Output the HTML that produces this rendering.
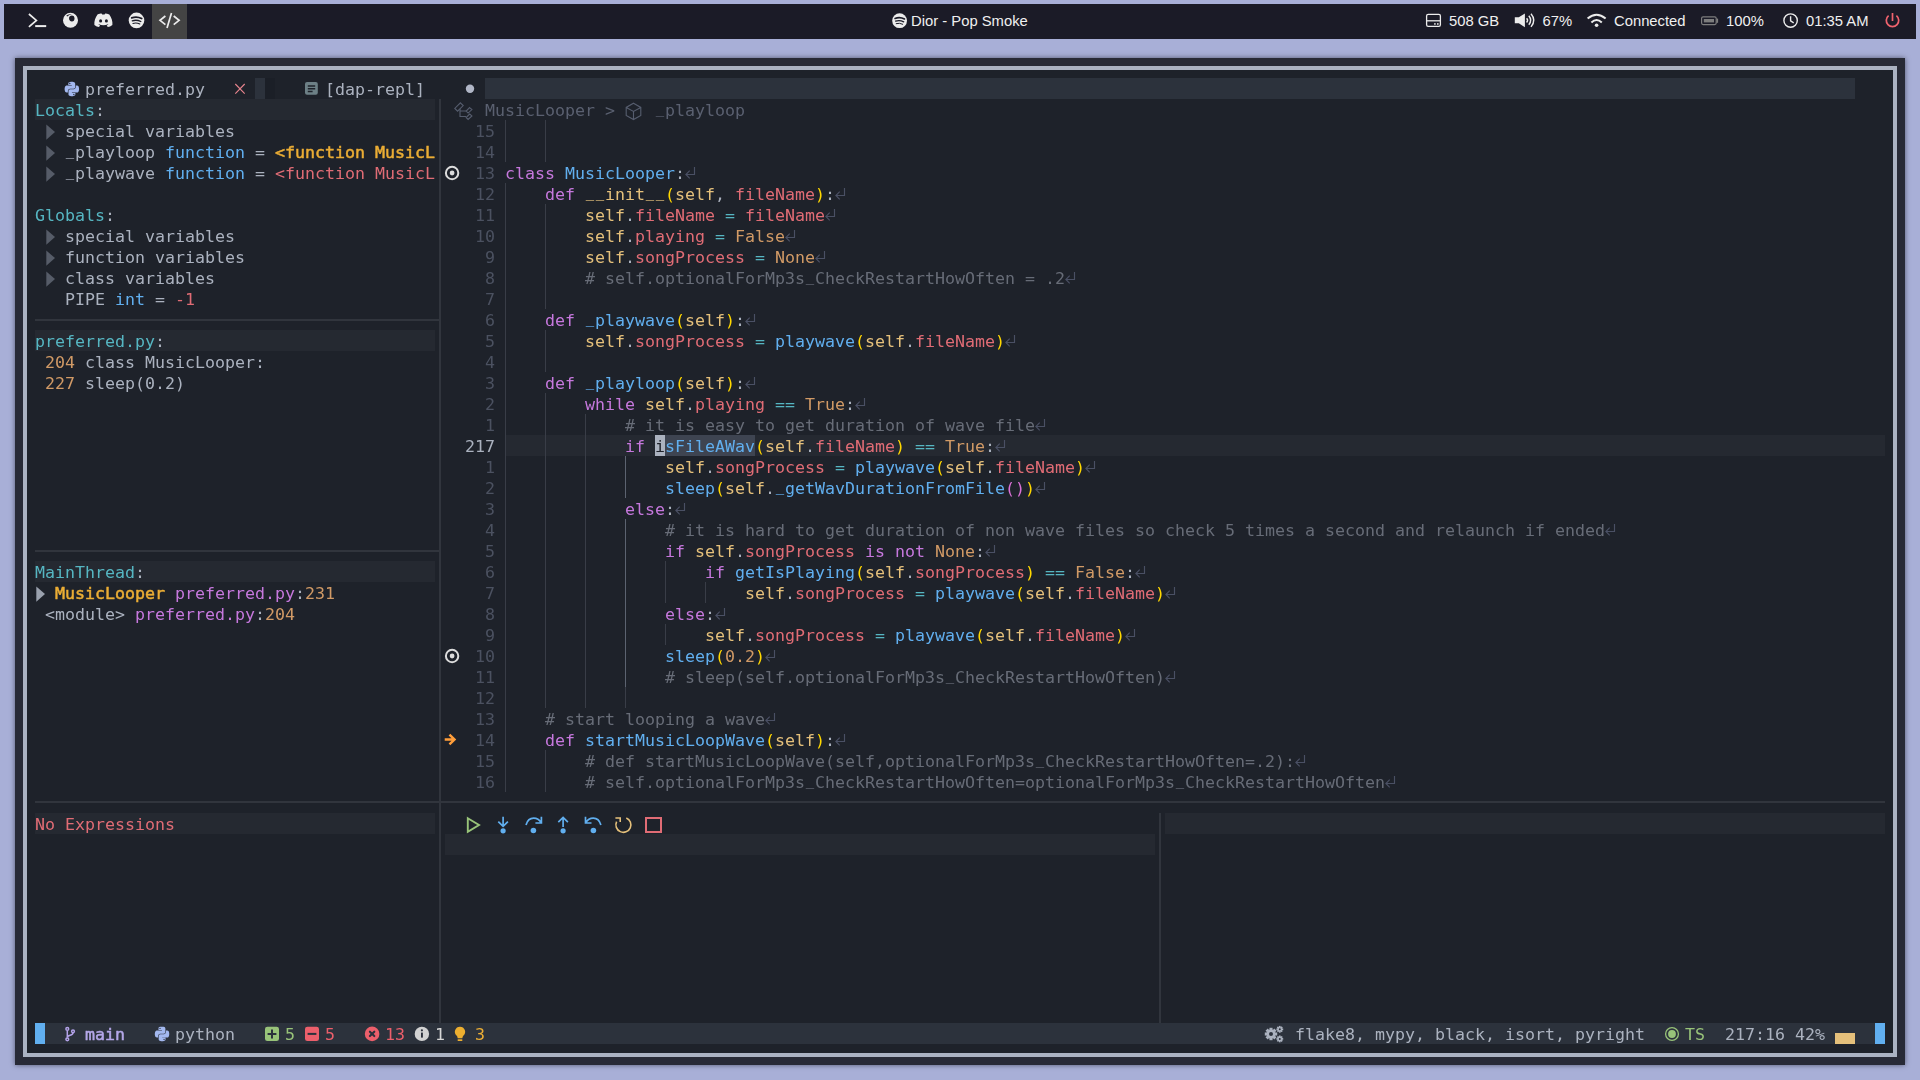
<!DOCTYPE html><html><head><meta charset="utf-8"><title>nvim dap</title><style>
html,body{margin:0;padding:0}
body{width:1920px;height:1080px;overflow:hidden;background:#a8afd7;position:relative;font-family:"DejaVu Sans Mono","Liberation Mono",monospace}
.b{position:absolute}
.t{position:absolute;height:21px;line-height:21px;font-size:16.61px;white-space:pre;color:#abb2bf;overflow:visible;padding-top:1px;box-sizing:border-box}
svg{position:absolute;overflow:visible}
#bar{position:absolute;left:4px;top:4px;width:1912px;height:35px;background:#1b1b27}
.bt{position:absolute;top:4px;height:35px;line-height:34px;font-family:"Liberation Sans",sans-serif;font-size:14.8px;color:#f0f0f0;white-space:pre}
#win{position:absolute;left:15px;top:58px;width:1890px;height:1007px;background:#282a36;box-shadow:0 0 5px rgba(0,0,10,.5)}
#frm{position:absolute;left:23px;top:66px;width:1874px;height:991px;background:#abb2c2}
#g{position:absolute;left:0;top:0;width:1920px;height:1080px;will-change:transform}
#term{position:absolute;left:27px;top:70px;width:1866px;height:983px;background:#1e222a}
.t i{font-style:normal;display:inline-block;transform:translateY(-3px) scaleX(.84)}
.fg{color:#abb2bf}.tl{color:#56b6c2}.bl{color:#61afef}.rd{color:#e06c75}.yl{color:#e5c07b}.or{color:#d19a66}
.pu{color:#c678dd}.gr{color:#98c379}.cm{color:#676c77}.ln{color:#4b5160}.eol{color:#4f5561}.by{color:#ffd700}.bp{color:#da70d6}
.cur{color:#1e222a}.sun{color:#ecae35}.sr{color:#ec5f6b}.wh{color:#d7d7d7}.bd{font-weight:normal;-webkit-text-stroke:0.5px currentColor}.wb{color:#5a6070}.lav{color:#b4a7e8}
</style></head><body>
<div id="bar"></div>
<div class="b " style="left:152px;top:4px;width:35px;height:35px;background:#444444"></div>
<svg style="left:0;top:0" width="1920" height="44" viewBox="0 0 1920 44" fill="none" stroke-linecap="butt">
<g stroke="#ececec" stroke-width="1.7" fill="none">
<path d="M28.9 14 L36.4 20.4 L28.9 26.9"/><path d="M35.2 26.1 H46.2" stroke-width="2"/>
<path d="M165.4 16 L160 20.3 L165.4 24.6"/><path d="M171.5 13 L167 28"/><path d="M173.7 16 L179.1 20.3 L173.7 24.6"/>
</g>
<g fill="#ececec" stroke="none">
<circle cx="70.5" cy="20.3" r="7.5"/>
<path d="M97.5 14.6 C99 13.9 100.6 13.6 101.6 13.6 L102.2 14.6 C103 14.5 104 14.5 104.6 14.6 L105.2 13.6 C106.4 13.7 107.8 14 109.3 14.6 C111.5 17.8 112.8 21.5 112.4 25 C110.8 26.2 109.3 26.9 107.8 27.1 L106.7 25.4 C107.3 25.2 107.9 24.9 108.4 24.6 L108 24.3 C105.2 25.6 101.6 25.6 98.8 24.3 L98.4 24.6 C98.9 24.9 99.5 25.2 100.1 25.4 L99 27.1 C97.5 26.9 96 26.2 94.4 25 C94 21.5 95.3 17.8 97.5 14.6 Z"/>
<circle cx="136.5" cy="20.4" r="7.8"/>
<circle cx="899.6" cy="20.7" r="7.4"/>
</g>
<g fill="#1b1b27" stroke="none">
<ellipse cx="71.9" cy="18.5" rx="2.6" ry="2.9"/>
<path d="M66.2 15.8 Q68.4 13.4 72.6 14.6 Q69.4 14.3 67.3 16.4 Z"/><path d="M69.2 19.8 Q68.2 17.2 70.3 15.7 Q69.6 17.6 70.2 19.4 Z" opacity=".75"/>
<ellipse cx="100.6" cy="20.9" rx="1.5" ry="1.7"/><ellipse cx="106.4" cy="20.9" rx="1.5" ry="1.7"/>
</g>
<g stroke="#1b1b27" fill="none" stroke-linecap="round">
<path d="M131.7 17.9 Q136.8 15.9 141.7 18.6" stroke-width="1.7"/>
<path d="M132.3 20.8 Q136.6 19.3 140.8 21.5" stroke-width="1.4"/>
<path d="M132.9 23.4 Q136.4 22.3 139.8 24" stroke-width="1.1"/>
<path d="M895 18.4 Q899.9 16.5 904.5 19" stroke-width="1.6"/>
<path d="M895.6 21.1 Q899.7 19.7 903.7 21.8" stroke-width="1.3"/>
<path d="M896.2 23.6 Q899.5 22.6 902.7 24.2" stroke-width="1"/>
</g>
<!-- disk -->
<g stroke="#ececec" stroke-width="1.3" fill="none">
<rect x="1426.6" y="14.3" width="13.8" height="12" rx="1.6"/><path d="M1426.6 20.8 H1440.4"/>
</g>
<g fill="#ececec"><rect x="1434.1" y="23.2" width="1.6" height="1.5"/><rect x="1437" y="23.2" width="1.6" height="1.5"/>
<!-- speaker -->
<path d="M1514.8 17.3 H1518.8 L1524.9 13.4 V27.2 L1518.8 23.3 H1514.8 Z"/>
<circle cx="1596.6" cy="25.3" r="1.8"/>
</g>
<g stroke="#ececec" fill="none" stroke-width="1.4">
<path d="M1526.6 18.2 Q1528.6 20.3 1526.6 22.4"/>
<path d="M1528.8 15.8 Q1532.6 20.3 1528.8 24.8"/>
<path d="M1531 13.7 Q1536.6 20.3 1531 26.9"/>
</g>
<g stroke="#ececec" fill="none" stroke-width="2">
<path d="M1587.6 18.6 Q1596.6 10.8 1605.6 18.6"/>
<path d="M1591.4 22.4 Q1596.6 17.6 1601.8 22.4"/>
</g>
<!-- battery -->
<rect x="1701.6" y="16.8" width="14.6" height="7.8" rx="1.5" stroke="#7d7d7d" stroke-width="1.2" fill="none"/>
<rect x="1703.8" y="19" width="10.2" height="3.4" fill="#7d7d7d"/><rect x="1716.6" y="18.6" width="1.5" height="4.2" fill="#7d7d7d"/>
<!-- clock -->
<circle cx="1790.6" cy="20.6" r="6.7" stroke="#ececec" stroke-width="1.4" fill="none"/>
<path d="M1790.6 16.2 V20.8 L1793.7 22.8" stroke="#ececec" stroke-width="1.4" fill="none"/>
<!-- power -->
<path d="M1888.6 15.6 A6.2 6.2 0 1 0 1896.4 15.6" stroke="#f0636e" stroke-width="1.7" fill="none"/>
<path d="M1892.5 13 V21" stroke="#f0636e" stroke-width="1.7"/>
</svg>

<span class="bt" style="left:911px">Dior - Pop Smoke</span>
<span class="bt" style="left:1449px">508 GB</span>
<span class="bt" style="left:1542.5px">67%</span>
<span class="bt" style="left:1614px">Connected</span>
<span class="bt" style="left:1726px">100%</span>
<span class="bt" style="left:1806px">01:35 AM</span>
<div id="win"></div><div id="frm"></div><div id="term"></div><div id="g">
<div class="b " style="left:255px;top:78px;width:10px;height:21px;background:#2c323c"></div>
<div class="b " style="left:265px;top:78px;width:10px;height:21px;background:#1b1f27"></div>
<div class="b " style="left:485px;top:78px;width:1370px;height:21px;background:#2c323c"></div>
<span class="t fg" style="left:85px;top:78px;width:120px">preferred.py</span>
<span class="t fg" style="left:325px;top:78px;width:100px">[dap-repl]</span>
<svg style="left:0;top:0" width="1920" height="1080" viewBox="0 0 1920 1080">
<path transform="translate(64.6,81.8) scale(0.03237) translate(0,-32)" d="M439.8 200.5c-7.700-30.900-22.300-54.200-53.400-54.200h-40.100v47.400c0 36.800-31.200 67.800-66.800 67.800H172.700c-29.200 0-53.400 25-53.400 54.300v101.800c0 29 25.200 46 53.400 54.300 33.800 9.900 66.300 11.700 106.800 0 26.900-7.800 53.400-23.500 53.400-54.300v-40.700H226.200v-13.600h160.200c31.100 0 42.600-21.700 53.400-54.200 11.200-33.500 10.700-65.700 0-108.600zM286.200 404c11.100 0 20.100 9.100 20.100 20.300 0 11.300-9 20.400-20.100 20.400-11 0-20.100-9.200-20.100-20.400.1-11.300 9.100-20.300 20.100-20.300zM167.800 248.100h106.800c29.700 0 53.400-24.500 53.400-54.300V91.900c0-29-24.400-50.700-53.400-55.600-35.800-5.900-74.700-5.600-106.800.1-45.200 8-53.400 24.700-53.400 55.600v40.700h106.900v13.600h-147c-31.100 0-58.300 18.700-66.800 54.200-9.800 40.700-10.200 66.100 0 108.600 7.600 31.600 25.700 54.200 56.800 54.200H101v-48.800c0-35.300 30.500-66.400 66.800-66.400zm-6.700-142.600c-11.100 0-20.100-9.100-20.100-20.300.1-11.300 9-20.400 20.100-20.400 11 0 20.100 9.200 20.100 20.400s-9 20.300-20.100 20.300z" fill="#a3b8ef"/>
<path d="M235.3 84 L244.7 93.6 M244.7 84 L235.3 93.6" stroke="#e8858e" stroke-width="1.1" fill="none"/>
<rect x="305" y="82" width="12.8" height="12.8" rx="2" fill="#6d8086"/>
<path d="M307.8 86 H315.2 M307.8 88.8 H315.2 M307.8 91.5 H312.6" stroke="#1e222a" stroke-width="1.4"/>
<circle cx="470" cy="88.8" r="4.2" fill="#b0b6c6"/>
</svg>
<div class="b " style="left:35px;top:99px;width:400px;height:21px;background:#252931"></div>
<div class="b " style="left:35px;top:330px;width:400px;height:21px;background:#252931"></div>
<div class="b " style="left:35px;top:561px;width:400px;height:21px;background:#252931"></div>
<div class="b " style="left:35px;top:813px;width:400px;height:21px;background:#252931"></div>
<div class="b " style="left:445px;top:834px;width:710px;height:21px;background:#252931"></div>
<div class="b " style="left:1165px;top:813px;width:720px;height:21px;background:#252931"></div>
<div class="b " style="left:505px;top:435px;width:1380px;height:21px;background:#252931"></div>
<div class="b " style="left:655px;top:435px;width:100px;height:21px;background:#3e4451"></div>
<div class="b " style="left:655px;top:435px;width:10px;height:21px;background:#abb2bf"></div>
<div class="b " style="left:439px;top:99px;width:2px;height:924px;background:#31353d"></div>
<div class="b " style="left:1159px;top:813px;width:2px;height:210px;background:#31353d"></div>
<div class="b " style="left:35px;top:801px;width:1850px;height:2px;background:#31353d"></div>
<div class="b " style="left:35px;top:319px;width:405px;height:2px;background:#31353d"></div>
<div class="b " style="left:35px;top:550px;width:405px;height:2px;background:#31353d"></div>
<span class="t tl" style="left:35px;top:99px;width:60px">Locals</span>
<span class="t fg" style="left:95px;top:99px;width:10px">:</span>
<svg style="left:45px;top:120px" width="10" height="21"><path d="M1.3 4.5 L10 12.1 L1.3 19.7 Z" fill="#565c68"/></svg>
<span class="t fg" style="left:65px;top:120px;width:170px">special variables</span>
<svg style="left:45px;top:141px" width="10" height="21"><path d="M1.3 4.5 L10 12.1 L1.3 19.7 Z" fill="#565c68"/></svg>
<span class="t fg" style="left:65px;top:141px;width:90px"><i>_</i>playloop</span>
<span class="t bl" style="left:165px;top:141px;width:80px">function</span>
<span class="t fg" style="left:255px;top:141px;width:10px">=</span>
<span class="t sun bd" style="left:275px;top:141px;width:160px">&lt;function MusicL</span>
<svg style="left:45px;top:162px" width="10" height="21"><path d="M1.3 4.5 L10 12.1 L1.3 19.7 Z" fill="#565c68"/></svg>
<span class="t fg" style="left:65px;top:162px;width:90px"><i>_</i>playwave</span>
<span class="t bl" style="left:165px;top:162px;width:80px">function</span>
<span class="t fg" style="left:255px;top:162px;width:10px">=</span>
<span class="t rd" style="left:275px;top:162px;width:160px">&lt;function MusicL</span>
<span class="t tl" style="left:35px;top:204px;width:70px">Globals</span>
<span class="t fg" style="left:105px;top:204px;width:10px">:</span>
<svg style="left:45px;top:225px" width="10" height="21"><path d="M1.3 4.5 L10 12.1 L1.3 19.7 Z" fill="#565c68"/></svg>
<span class="t fg" style="left:65px;top:225px;width:170px">special variables</span>
<svg style="left:45px;top:246px" width="10" height="21"><path d="M1.3 4.5 L10 12.1 L1.3 19.7 Z" fill="#565c68"/></svg>
<span class="t fg" style="left:65px;top:246px;width:180px">function variables</span>
<svg style="left:45px;top:267px" width="10" height="21"><path d="M1.3 4.5 L10 12.1 L1.3 19.7 Z" fill="#565c68"/></svg>
<span class="t fg" style="left:65px;top:267px;width:150px">class variables</span>
<span class="t fg" style="left:65px;top:288px;width:40px">PIPE</span>
<span class="t bl" style="left:115px;top:288px;width:30px">int</span>
<span class="t fg" style="left:155px;top:288px;width:10px">=</span>
<span class="t rd" style="left:175px;top:288px;width:20px">-1</span>
<span class="t tl" style="left:35px;top:330px;width:120px">preferred.py</span>
<span class="t fg" style="left:155px;top:330px;width:10px">:</span>
<span class="t or" style="left:45px;top:351px;width:30px">204</span>
<span class="t fg" style="left:85px;top:351px;width:180px">class MusicLooper:</span>
<span class="t or" style="left:45px;top:372px;width:30px">227</span>
<span class="t fg" style="left:85px;top:372px;width:100px">sleep(0.2)</span>
<span class="t tl" style="left:35px;top:561px;width:100px">MainThread</span>
<span class="t fg" style="left:135px;top:561px;width:10px">:</span>
<svg style="left:35px;top:582px" width="10" height="21"><path d="M1.3 4.5 L10 12.1 L1.3 19.7 Z" fill="#9aa1ae"/></svg>
<span class="t sun bd" style="left:55px;top:582px;width:110px">MusicLooper</span>
<span class="t pu" style="left:175px;top:582px;width:120px">preferred.py</span>
<span class="t fg" style="left:295px;top:582px;width:10px">:</span>
<span class="t or" style="left:305px;top:582px;width:30px">231</span>
<span class="t fg" style="left:45px;top:603px;width:80px">&lt;module&gt;</span>
<span class="t pu" style="left:135px;top:603px;width:120px">preferred.py</span>
<span class="t fg" style="left:255px;top:603px;width:10px">:</span>
<span class="t or" style="left:265px;top:603px;width:30px">204</span>
<span class="t rd" style="left:35px;top:813px;width:140px">No Expressions</span>
<span class="t wb" style="left:485px;top:99px;width:110px">MusicLooper</span>
<span class="t wb" style="left:605px;top:99px;width:10px">&gt;</span>
<span class="t wb" style="left:655px;top:99px;width:90px"><i>_</i>playloop</span>
<svg style="left:0;top:0" width="1920" height="1080" viewBox="0 0 1920 1080" fill="none" stroke="#565d6e" stroke-width="1.1">
<path d="M460.4 102.8 L463.2 105.6 L457.6 111.2 L454.8 108.4 Z"/>
<path d="M460 109 V116.5 H466 M460 111 H466.3"/>
<path d="M469.6 107.6 L471.9 109.6 L468.1 113.1 L466.2 111.1 Z"/>
<path d="M469.6 114 L471.9 115.9 L468.1 119.4 L466.2 117.5 Z"/>
<path d="M633.5 103.2 L640.8 107.4 V115.4 L633.5 119.6 L626.2 115.4 V107.4 Z M626.2 107.4 L633.5 111.4 L640.8 107.4 M633.5 111.4 V119.6"/>
</svg>
<span class="t ln" style="left:475px;top:120px;width:20px">15</span>
<div class="b " style="left:505px;top:120px;width:1px;height:21px;background:#393d47"></div>
<div class="b " style="left:545px;top:120px;width:1px;height:21px;background:#393d47"></div>
<span class="t ln" style="left:475px;top:141px;width:20px">14</span>
<div class="b " style="left:505px;top:141px;width:1px;height:21px;background:#393d47"></div>
<div class="b " style="left:545px;top:141px;width:1px;height:21px;background:#393d47"></div>
<span class="t ln" style="left:475px;top:162px;width:20px">13</span>
<span class="t pu" style="left:505px;top:162px;width:50px">class</span>
<span class="t bl" style="left:565px;top:162px;width:110px">MusicLooper</span>
<span class="t fg" style="left:675px;top:162px;width:10px">:</span>
<span class="t ln" style="left:475px;top:183px;width:20px">12</span>
<div class="b " style="left:505px;top:183px;width:1px;height:21px;background:#393d47"></div>
<span class="t pu" style="left:545px;top:183px;width:30px">def</span>
<span class="t yl" style="left:585px;top:183px;width:80px"><i>_</i><i>_</i>init<i>_</i><i>_</i></span>
<span class="t by" style="left:665px;top:183px;width:10px">(</span>
<span class="t yl" style="left:675px;top:183px;width:40px">self</span>
<span class="t fg" style="left:715px;top:183px;width:10px">,</span>
<span class="t rd" style="left:735px;top:183px;width:80px">fileName</span>
<span class="t by" style="left:815px;top:183px;width:10px">)</span>
<span class="t fg" style="left:825px;top:183px;width:10px">:</span>
<span class="t ln" style="left:475px;top:204px;width:20px">11</span>
<div class="b " style="left:505px;top:204px;width:1px;height:21px;background:#393d47"></div>
<div class="b " style="left:545px;top:204px;width:1px;height:21px;background:#393d47"></div>
<span class="t yl" style="left:585px;top:204px;width:40px">self</span>
<span class="t fg" style="left:625px;top:204px;width:10px">.</span>
<span class="t rd" style="left:635px;top:204px;width:80px">fileName</span>
<span class="t tl" style="left:725px;top:204px;width:10px">=</span>
<span class="t rd" style="left:745px;top:204px;width:80px">fileName</span>
<span class="t ln" style="left:475px;top:225px;width:20px">10</span>
<div class="b " style="left:505px;top:225px;width:1px;height:21px;background:#393d47"></div>
<div class="b " style="left:545px;top:225px;width:1px;height:21px;background:#393d47"></div>
<span class="t yl" style="left:585px;top:225px;width:40px">self</span>
<span class="t fg" style="left:625px;top:225px;width:10px">.</span>
<span class="t rd" style="left:635px;top:225px;width:70px">playing</span>
<span class="t tl" style="left:715px;top:225px;width:10px">=</span>
<span class="t or" style="left:735px;top:225px;width:50px">False</span>
<span class="t ln" style="left:485px;top:246px;width:10px">9</span>
<div class="b " style="left:505px;top:246px;width:1px;height:21px;background:#393d47"></div>
<div class="b " style="left:545px;top:246px;width:1px;height:21px;background:#393d47"></div>
<span class="t yl" style="left:585px;top:246px;width:40px">self</span>
<span class="t fg" style="left:625px;top:246px;width:10px">.</span>
<span class="t rd" style="left:635px;top:246px;width:110px">songProcess</span>
<span class="t tl" style="left:755px;top:246px;width:10px">=</span>
<span class="t or" style="left:775px;top:246px;width:40px">None</span>
<span class="t ln" style="left:485px;top:267px;width:10px">8</span>
<div class="b " style="left:505px;top:267px;width:1px;height:21px;background:#393d47"></div>
<div class="b " style="left:545px;top:267px;width:1px;height:21px;background:#393d47"></div>
<span class="t cm" style="left:585px;top:267px;width:480px"># self.optionalForMp3s<i>_</i>CheckRestartHowOften = .2</span>
<span class="t ln" style="left:485px;top:288px;width:10px">7</span>
<div class="b " style="left:505px;top:288px;width:1px;height:21px;background:#393d47"></div>
<div class="b " style="left:545px;top:288px;width:1px;height:21px;background:#393d47"></div>
<span class="t ln" style="left:485px;top:309px;width:10px">6</span>
<div class="b " style="left:505px;top:309px;width:1px;height:21px;background:#393d47"></div>
<span class="t pu" style="left:545px;top:309px;width:30px">def</span>
<span class="t bl" style="left:585px;top:309px;width:90px"><i>_</i>playwave</span>
<span class="t by" style="left:675px;top:309px;width:10px">(</span>
<span class="t yl" style="left:685px;top:309px;width:40px">self</span>
<span class="t by" style="left:725px;top:309px;width:10px">)</span>
<span class="t fg" style="left:735px;top:309px;width:10px">:</span>
<span class="t ln" style="left:485px;top:330px;width:10px">5</span>
<div class="b " style="left:505px;top:330px;width:1px;height:21px;background:#393d47"></div>
<div class="b " style="left:545px;top:330px;width:1px;height:21px;background:#393d47"></div>
<span class="t yl" style="left:585px;top:330px;width:40px">self</span>
<span class="t fg" style="left:625px;top:330px;width:10px">.</span>
<span class="t rd" style="left:635px;top:330px;width:110px">songProcess</span>
<span class="t tl" style="left:755px;top:330px;width:10px">=</span>
<span class="t bl" style="left:775px;top:330px;width:80px">playwave</span>
<span class="t by" style="left:855px;top:330px;width:10px">(</span>
<span class="t yl" style="left:865px;top:330px;width:40px">self</span>
<span class="t fg" style="left:905px;top:330px;width:10px">.</span>
<span class="t rd" style="left:915px;top:330px;width:80px">fileName</span>
<span class="t by" style="left:995px;top:330px;width:10px">)</span>
<span class="t ln" style="left:485px;top:351px;width:10px">4</span>
<div class="b " style="left:505px;top:351px;width:1px;height:21px;background:#393d47"></div>
<div class="b " style="left:545px;top:351px;width:1px;height:21px;background:#393d47"></div>
<span class="t ln" style="left:485px;top:372px;width:10px">3</span>
<div class="b " style="left:505px;top:372px;width:1px;height:21px;background:#393d47"></div>
<span class="t pu" style="left:545px;top:372px;width:30px">def</span>
<span class="t bl" style="left:585px;top:372px;width:90px"><i>_</i>playloop</span>
<span class="t by" style="left:675px;top:372px;width:10px">(</span>
<span class="t yl" style="left:685px;top:372px;width:40px">self</span>
<span class="t by" style="left:725px;top:372px;width:10px">)</span>
<span class="t fg" style="left:735px;top:372px;width:10px">:</span>
<span class="t ln" style="left:485px;top:393px;width:10px">2</span>
<div class="b " style="left:505px;top:393px;width:1px;height:21px;background:#393d47"></div>
<div class="b " style="left:545px;top:393px;width:1px;height:21px;background:#393d47"></div>
<span class="t pu" style="left:585px;top:393px;width:50px">while</span>
<span class="t yl" style="left:645px;top:393px;width:40px">self</span>
<span class="t fg" style="left:685px;top:393px;width:10px">.</span>
<span class="t rd" style="left:695px;top:393px;width:70px">playing</span>
<span class="t tl" style="left:775px;top:393px;width:20px">==</span>
<span class="t or" style="left:805px;top:393px;width:40px">True</span>
<span class="t fg" style="left:845px;top:393px;width:10px">:</span>
<span class="t ln" style="left:485px;top:414px;width:10px">1</span>
<div class="b " style="left:505px;top:414px;width:1px;height:21px;background:#393d47"></div>
<div class="b " style="left:545px;top:414px;width:1px;height:21px;background:#393d47"></div>
<div class="b " style="left:585px;top:414px;width:1px;height:21px;background:#393d47"></div>
<span class="t cm" style="left:625px;top:414px;width:410px"># it is easy to get duration of wave file</span>
<span class="t fg" style="left:465px;top:435px;width:30px">217</span>
<div class="b " style="left:505px;top:435px;width:1px;height:21px;background:#393d47"></div>
<div class="b " style="left:545px;top:435px;width:1px;height:21px;background:#393d47"></div>
<div class="b " style="left:585px;top:435px;width:1px;height:21px;background:#393d47"></div>
<span class="t pu" style="left:625px;top:435px;width:20px">if</span>
<span class="t bl" style="left:655px;top:435px;width:100px">isFileAWav</span>
<span class="t by" style="left:755px;top:435px;width:10px">(</span>
<span class="t yl" style="left:765px;top:435px;width:40px">self</span>
<span class="t fg" style="left:805px;top:435px;width:10px">.</span>
<span class="t rd" style="left:815px;top:435px;width:80px">fileName</span>
<span class="t by" style="left:895px;top:435px;width:10px">)</span>
<span class="t tl" style="left:915px;top:435px;width:20px">==</span>
<span class="t or" style="left:945px;top:435px;width:40px">True</span>
<span class="t fg" style="left:985px;top:435px;width:10px">:</span>
<span class="t ln" style="left:485px;top:456px;width:10px">1</span>
<div class="b " style="left:505px;top:456px;width:1px;height:21px;background:#393d47"></div>
<div class="b " style="left:545px;top:456px;width:1px;height:21px;background:#393d47"></div>
<div class="b " style="left:585px;top:456px;width:1px;height:21px;background:#393d47"></div>
<div class="b " style="left:625px;top:456px;width:1px;height:21px;background:#5c6370"></div>
<span class="t yl" style="left:665px;top:456px;width:40px">self</span>
<span class="t fg" style="left:705px;top:456px;width:10px">.</span>
<span class="t rd" style="left:715px;top:456px;width:110px">songProcess</span>
<span class="t tl" style="left:835px;top:456px;width:10px">=</span>
<span class="t bl" style="left:855px;top:456px;width:80px">playwave</span>
<span class="t by" style="left:935px;top:456px;width:10px">(</span>
<span class="t yl" style="left:945px;top:456px;width:40px">self</span>
<span class="t fg" style="left:985px;top:456px;width:10px">.</span>
<span class="t rd" style="left:995px;top:456px;width:80px">fileName</span>
<span class="t by" style="left:1075px;top:456px;width:10px">)</span>
<span class="t ln" style="left:485px;top:477px;width:10px">2</span>
<div class="b " style="left:505px;top:477px;width:1px;height:21px;background:#393d47"></div>
<div class="b " style="left:545px;top:477px;width:1px;height:21px;background:#393d47"></div>
<div class="b " style="left:585px;top:477px;width:1px;height:21px;background:#393d47"></div>
<div class="b " style="left:625px;top:477px;width:1px;height:21px;background:#5c6370"></div>
<span class="t bl" style="left:665px;top:477px;width:50px">sleep</span>
<span class="t by" style="left:715px;top:477px;width:10px">(</span>
<span class="t yl" style="left:725px;top:477px;width:40px">self</span>
<span class="t fg" style="left:765px;top:477px;width:10px">.</span>
<span class="t bl" style="left:775px;top:477px;width:230px"><i>_</i>getWavDurationFromFile</span>
<span class="t bp" style="left:1005px;top:477px;width:20px">()</span>
<span class="t by" style="left:1025px;top:477px;width:10px">)</span>
<span class="t ln" style="left:485px;top:498px;width:10px">3</span>
<div class="b " style="left:505px;top:498px;width:1px;height:21px;background:#393d47"></div>
<div class="b " style="left:545px;top:498px;width:1px;height:21px;background:#393d47"></div>
<div class="b " style="left:585px;top:498px;width:1px;height:21px;background:#393d47"></div>
<span class="t pu" style="left:625px;top:498px;width:40px">else</span>
<span class="t fg" style="left:665px;top:498px;width:10px">:</span>
<span class="t ln" style="left:485px;top:519px;width:10px">4</span>
<div class="b " style="left:505px;top:519px;width:1px;height:21px;background:#393d47"></div>
<div class="b " style="left:545px;top:519px;width:1px;height:21px;background:#393d47"></div>
<div class="b " style="left:585px;top:519px;width:1px;height:21px;background:#393d47"></div>
<div class="b " style="left:625px;top:519px;width:1px;height:21px;background:#5c6370"></div>
<span class="t cm" style="left:665px;top:519px;width:940px"># it is hard to get duration of non wave files so check 5 times a second and relaunch if ended</span>
<span class="t ln" style="left:485px;top:540px;width:10px">5</span>
<div class="b " style="left:505px;top:540px;width:1px;height:21px;background:#393d47"></div>
<div class="b " style="left:545px;top:540px;width:1px;height:21px;background:#393d47"></div>
<div class="b " style="left:585px;top:540px;width:1px;height:21px;background:#393d47"></div>
<div class="b " style="left:625px;top:540px;width:1px;height:21px;background:#5c6370"></div>
<span class="t pu" style="left:665px;top:540px;width:20px">if</span>
<span class="t yl" style="left:695px;top:540px;width:40px">self</span>
<span class="t fg" style="left:735px;top:540px;width:10px">.</span>
<span class="t rd" style="left:745px;top:540px;width:110px">songProcess</span>
<span class="t pu" style="left:865px;top:540px;width:20px">is</span>
<span class="t pu" style="left:895px;top:540px;width:30px">not</span>
<span class="t or" style="left:935px;top:540px;width:40px">None</span>
<span class="t fg" style="left:975px;top:540px;width:10px">:</span>
<span class="t ln" style="left:485px;top:561px;width:10px">6</span>
<div class="b " style="left:505px;top:561px;width:1px;height:21px;background:#393d47"></div>
<div class="b " style="left:545px;top:561px;width:1px;height:21px;background:#393d47"></div>
<div class="b " style="left:585px;top:561px;width:1px;height:21px;background:#393d47"></div>
<div class="b " style="left:625px;top:561px;width:1px;height:21px;background:#5c6370"></div>
<div class="b " style="left:665px;top:561px;width:1px;height:21px;background:#393d47"></div>
<span class="t pu" style="left:705px;top:561px;width:20px">if</span>
<span class="t bl" style="left:735px;top:561px;width:120px">getIsPlaying</span>
<span class="t by" style="left:855px;top:561px;width:10px">(</span>
<span class="t yl" style="left:865px;top:561px;width:40px">self</span>
<span class="t fg" style="left:905px;top:561px;width:10px">.</span>
<span class="t rd" style="left:915px;top:561px;width:110px">songProcess</span>
<span class="t by" style="left:1025px;top:561px;width:10px">)</span>
<span class="t tl" style="left:1045px;top:561px;width:20px">==</span>
<span class="t or" style="left:1075px;top:561px;width:50px">False</span>
<span class="t fg" style="left:1125px;top:561px;width:10px">:</span>
<span class="t ln" style="left:485px;top:582px;width:10px">7</span>
<div class="b " style="left:505px;top:582px;width:1px;height:21px;background:#393d47"></div>
<div class="b " style="left:545px;top:582px;width:1px;height:21px;background:#393d47"></div>
<div class="b " style="left:585px;top:582px;width:1px;height:21px;background:#393d47"></div>
<div class="b " style="left:625px;top:582px;width:1px;height:21px;background:#5c6370"></div>
<div class="b " style="left:665px;top:582px;width:1px;height:21px;background:#393d47"></div>
<div class="b " style="left:705px;top:582px;width:1px;height:21px;background:#393d47"></div>
<span class="t yl" style="left:745px;top:582px;width:40px">self</span>
<span class="t fg" style="left:785px;top:582px;width:10px">.</span>
<span class="t rd" style="left:795px;top:582px;width:110px">songProcess</span>
<span class="t tl" style="left:915px;top:582px;width:10px">=</span>
<span class="t bl" style="left:935px;top:582px;width:80px">playwave</span>
<span class="t by" style="left:1015px;top:582px;width:10px">(</span>
<span class="t yl" style="left:1025px;top:582px;width:40px">self</span>
<span class="t fg" style="left:1065px;top:582px;width:10px">.</span>
<span class="t rd" style="left:1075px;top:582px;width:80px">fileName</span>
<span class="t by" style="left:1155px;top:582px;width:10px">)</span>
<span class="t ln" style="left:485px;top:603px;width:10px">8</span>
<div class="b " style="left:505px;top:603px;width:1px;height:21px;background:#393d47"></div>
<div class="b " style="left:545px;top:603px;width:1px;height:21px;background:#393d47"></div>
<div class="b " style="left:585px;top:603px;width:1px;height:21px;background:#393d47"></div>
<div class="b " style="left:625px;top:603px;width:1px;height:21px;background:#5c6370"></div>
<span class="t pu" style="left:665px;top:603px;width:40px">else</span>
<span class="t fg" style="left:705px;top:603px;width:10px">:</span>
<span class="t ln" style="left:485px;top:624px;width:10px">9</span>
<div class="b " style="left:505px;top:624px;width:1px;height:21px;background:#393d47"></div>
<div class="b " style="left:545px;top:624px;width:1px;height:21px;background:#393d47"></div>
<div class="b " style="left:585px;top:624px;width:1px;height:21px;background:#393d47"></div>
<div class="b " style="left:625px;top:624px;width:1px;height:21px;background:#5c6370"></div>
<div class="b " style="left:665px;top:624px;width:1px;height:21px;background:#393d47"></div>
<span class="t yl" style="left:705px;top:624px;width:40px">self</span>
<span class="t fg" style="left:745px;top:624px;width:10px">.</span>
<span class="t rd" style="left:755px;top:624px;width:110px">songProcess</span>
<span class="t tl" style="left:875px;top:624px;width:10px">=</span>
<span class="t bl" style="left:895px;top:624px;width:80px">playwave</span>
<span class="t by" style="left:975px;top:624px;width:10px">(</span>
<span class="t yl" style="left:985px;top:624px;width:40px">self</span>
<span class="t fg" style="left:1025px;top:624px;width:10px">.</span>
<span class="t rd" style="left:1035px;top:624px;width:80px">fileName</span>
<span class="t by" style="left:1115px;top:624px;width:10px">)</span>
<span class="t ln" style="left:475px;top:645px;width:20px">10</span>
<div class="b " style="left:505px;top:645px;width:1px;height:21px;background:#393d47"></div>
<div class="b " style="left:545px;top:645px;width:1px;height:21px;background:#393d47"></div>
<div class="b " style="left:585px;top:645px;width:1px;height:21px;background:#393d47"></div>
<div class="b " style="left:625px;top:645px;width:1px;height:21px;background:#5c6370"></div>
<span class="t bl" style="left:665px;top:645px;width:50px">sleep</span>
<span class="t by" style="left:715px;top:645px;width:10px">(</span>
<span class="t or" style="left:725px;top:645px;width:30px">0.2</span>
<span class="t by" style="left:755px;top:645px;width:10px">)</span>
<span class="t ln" style="left:475px;top:666px;width:20px">11</span>
<div class="b " style="left:505px;top:666px;width:1px;height:21px;background:#393d47"></div>
<div class="b " style="left:545px;top:666px;width:1px;height:21px;background:#393d47"></div>
<div class="b " style="left:585px;top:666px;width:1px;height:21px;background:#393d47"></div>
<div class="b " style="left:625px;top:666px;width:1px;height:21px;background:#5c6370"></div>
<span class="t cm" style="left:665px;top:666px;width:500px"># sleep(self.optionalForMp3s<i>_</i>CheckRestartHowOften)</span>
<span class="t ln" style="left:475px;top:687px;width:20px">12</span>
<div class="b " style="left:505px;top:687px;width:1px;height:21px;background:#393d47"></div>
<div class="b " style="left:545px;top:687px;width:1px;height:21px;background:#393d47"></div>
<div class="b " style="left:585px;top:687px;width:1px;height:21px;background:#393d47"></div>
<div class="b " style="left:625px;top:687px;width:1px;height:21px;background:#393d47"></div>
<span class="t ln" style="left:475px;top:708px;width:20px">13</span>
<div class="b " style="left:505px;top:708px;width:1px;height:21px;background:#393d47"></div>
<span class="t cm" style="left:545px;top:708px;width:220px"># start looping a wave</span>
<span class="t ln" style="left:475px;top:729px;width:20px">14</span>
<div class="b " style="left:505px;top:729px;width:1px;height:21px;background:#393d47"></div>
<span class="t pu" style="left:545px;top:729px;width:30px">def</span>
<span class="t bl" style="left:585px;top:729px;width:180px">startMusicLoopWave</span>
<span class="t by" style="left:765px;top:729px;width:10px">(</span>
<span class="t yl" style="left:775px;top:729px;width:40px">self</span>
<span class="t by" style="left:815px;top:729px;width:10px">)</span>
<span class="t fg" style="left:825px;top:729px;width:10px">:</span>
<span class="t ln" style="left:475px;top:750px;width:20px">15</span>
<div class="b " style="left:505px;top:750px;width:1px;height:21px;background:#393d47"></div>
<div class="b " style="left:545px;top:750px;width:1px;height:21px;background:#393d47"></div>
<span class="t cm" style="left:585px;top:750px;width:710px"># def startMusicLoopWave(self,optionalForMp3s<i>_</i>CheckRestartHowOften=.2):</span>
<span class="t ln" style="left:475px;top:771px;width:20px">16</span>
<div class="b " style="left:505px;top:771px;width:1px;height:21px;background:#393d47"></div>
<div class="b " style="left:545px;top:771px;width:1px;height:21px;background:#393d47"></div>
<span class="t cm" style="left:585px;top:771px;width:800px"># self.optionalForMp3s<i>_</i>CheckRestartHowOften=optionalForMp3s<i>_</i>CheckRestartHowOften</span>
<svg style="left:0;top:0" width="1920" height="1080" viewBox="0 0 1920 1080"><path d="M694.5 167V174.5H685.9M689.7 170.6L685.9 174.5L689.7 178.4M844.5 188V195.5H835.9M839.7 191.6L835.9 195.5L839.7 199.4M834.5 209V216.5H825.9M829.7 212.6L825.9 216.5L829.7 220.4M794.5 230V237.5H785.9M789.7 233.6L785.9 237.5L789.7 241.4M824.5 251V258.5H815.9M819.7 254.6L815.9 258.5L819.7 262.4M1074.5 272V279.5H1065.9M1069.7 275.6L1065.9 279.5L1069.7 283.4M754.5 314V321.5H745.9M749.7 317.6L745.9 321.5L749.7 325.4M1014.5 335V342.5H1005.9M1009.7 338.6L1005.9 342.5L1009.7 346.4M754.5 377V384.5H745.9M749.7 380.6L745.9 384.5L749.7 388.4M864.5 398V405.5H855.9M859.7 401.6L855.9 405.5L859.7 409.4M1044.5 419V426.5H1035.9M1039.7 422.6L1035.9 426.5L1039.7 430.4M1004.5 440V447.5H995.9M999.7 443.6L995.9 447.5L999.7 451.4M1094.5 461V468.5H1085.9M1089.7 464.6L1085.9 468.5L1089.7 472.4M1044.5 482V489.5H1035.9M1039.7 485.6L1035.9 489.5L1039.7 493.4M684.5 503V510.5H675.9M679.7 506.6L675.9 510.5L679.7 514.4M1614.5 524V531.5H1605.9M1609.7 527.6L1605.9 531.5L1609.7 535.4M994.5 545V552.5H985.9M989.7 548.6L985.9 552.5L989.7 556.4M1144.5 566V573.5H1135.9M1139.7 569.6L1135.9 573.5L1139.7 577.4M1174.5 587V594.5H1165.9M1169.7 590.6L1165.9 594.5L1169.7 598.4M724.5 608V615.5H715.9M719.7 611.6L715.9 615.5L719.7 619.4M1134.5 629V636.5H1125.9M1129.7 632.6L1125.9 636.5L1129.7 640.4M774.5 650V657.5H765.9M769.7 653.6L765.9 657.5L769.7 661.4M1174.5 671V678.5H1165.9M1169.7 674.6L1165.9 678.5L1169.7 682.4M774.5 713V720.5H765.9M769.7 716.6L765.9 720.5L769.7 724.4M844.5 734V741.5H835.9M839.7 737.6L835.9 741.5L839.7 745.4M1304.5 755V762.5H1295.9M1299.7 758.6L1295.9 762.5L1299.7 766.4M1394.5 776V783.5H1385.9M1389.7 779.6L1385.9 783.5L1389.7 787.4" stroke="#4a5064" stroke-width="1.15" fill="none"/></svg>
<svg style="left:0;top:0" width="1920" height="1080" viewBox="0 0 1920 1080">
<circle cx="452.1" cy="173" r="6.2" stroke="#dcdcdc" stroke-width="2" fill="none"/><circle cx="452.1" cy="173" r="2.4" fill="#dcdcdc"/><circle cx="452.1" cy="656" r="6.2" stroke="#dcdcdc" stroke-width="2" fill="none"/><circle cx="452.1" cy="656" r="2.4" fill="#dcdcdc"/>
<path d="M444.7 738.2 H451.5 L448.6 735.4 L450.3 733.8 L456.25 739.5 L450.3 745.2 L448.6 743.5 L451.5 740.7 H444.7 Z" fill="#ff9e3b"/>
</svg>
<svg style="left:0;top:0" width="1920" height="1080" viewBox="0 0 1920 1080" fill="none" stroke-width="1.7">
<path d="M467.8 818.3 L479 825 L467.8 831.7 Z" stroke="#98c379" stroke-width="1.9" stroke-linejoin="miter"/>
<g stroke="#61afef">
<path d="M503.1 816.8 V826.4 M498.3 821.6 L503.1 826.4 L507.9 821.6"/>
<path d="M563.1 827 V817.6 M558.3 822.2 L563.1 817.4 L567.9 822.2"/>
<path d="M526 825 Q528 818.2 533.6 818.2 Q538.6 818.2 541 822.6 M541.4 816.8 V823 H535.4"/>
<path d="M600.9 825 Q598.9 818.2 593.3 818.2 Q588.3 818.2 585.9 822.6 M585.5 816.8 V823 H591.5"/>
</g>
<g fill="#61afef" stroke="none"><circle cx="503.1" cy="830.8" r="2.6"/><circle cx="563.1" cy="830.8" r="2.6"/><circle cx="533.4" cy="830.5" r="2.8"/><circle cx="593.4" cy="830.5" r="2.8"/></g>
<path d="M626.3 817.9 A7.5 7.5 0 1 1 616.6 821.6 M615.4 818 H620.2 V822" stroke="#e5c07b" stroke-width="1.6"/>
<rect x="646" y="818" width="15" height="14" stroke="#e06c75" stroke-width="2"/>
</svg>
<span class="t cur"  style="left:655px;top:435px;width:10px;background:#abb2bf">i</span>
<div class="b " style="left:35px;top:1023px;width:1850px;height:21px;background:#2c323c"></div>
<div class="b " style="left:35px;top:1023px;width:10px;height:21px;background:#61afef"></div>
<div class="b " style="left:1875px;top:1023px;width:10px;height:21px;background:#61afef"></div>
<div class="b " style="left:1835px;top:1033px;width:20px;height:11px;background:#e5c07b"></div>
<span class="t lav bd" style="left:85px;top:1023px;width:40px">main</span>
<span class="t fg" style="left:175px;top:1023px;width:60px">python</span>
<span class="t gr" style="left:285px;top:1023px;width:10px">5</span>
<span class="t sr" style="left:325px;top:1023px;width:10px">5</span>
<span class="t sr" style="left:385px;top:1023px;width:20px">13</span>
<span class="t wh" style="left:435px;top:1023px;width:10px">1</span>
<span class="t sun" style="left:475px;top:1023px;width:10px">3</span>
<span class="t fg" style="left:1295px;top:1023px;width:350px">flake8, mypy, black, isort, pyright</span>
<span class="t gr" style="left:1685px;top:1023px;width:20px">TS</span>
<span class="t fg" style="left:1725px;top:1023px;width:60px">217:16</span>
<span class="t fg" style="left:1795px;top:1023px;width:30px">42%</span>
<svg style="left:0;top:0" width="1920" height="1080" viewBox="0 0 1920 1080">
<g stroke="#b3a2e8" stroke-width="1.5" fill="none"><circle cx="67.3" cy="1028.9" r="1.4"/><circle cx="73" cy="1031.3" r="1.4"/><circle cx="67.3" cy="1039.3" r="1.4"/>
<path d="M67.3 1030.4 V1037.8 M73 1032.8 C73 1036.2 67.3 1034.4 67.3 1037.8"/></g>
<path transform="translate(154.8,1026.7) scale(0.03237) translate(0,-32)" d="M439.8 200.5c-7.700-30.900-22.300-54.200-53.400-54.200h-40.100v47.400c0 36.800-31.200 67.800-66.800 67.800H172.700c-29.200 0-53.400 25-53.400 54.300v101.800c0 29 25.200 46 53.400 54.300 33.800 9.900 66.300 11.700 106.800 0 26.900-7.800 53.400-23.500 53.400-54.300v-40.700H226.200v-13.600h160.200c31.100 0 42.600-21.700 53.400-54.200 11.200-33.500 10.700-65.700 0-108.600zM286.200 404c11.100 0 20.100 9.100 20.100 20.300 0 11.300-9 20.400-20.100 20.400-11 0-20.100-9.200-20.100-20.400.1-11.300 9.100-20.300 20.100-20.300zM167.800 248.100h106.800c29.700 0 53.400-24.500 53.400-54.300V91.900c0-29-24.400-50.700-53.400-55.600-35.800-5.900-74.700-5.600-106.800.1-45.200 8-53.400 24.700-53.400 55.600v40.700h106.900v13.600h-147c-31.100 0-58.300 18.700-66.800 54.200-9.800 40.700-10.200 66.100 0 108.600 7.600 31.600 25.700 54.200 56.800 54.200H101v-48.800c0-35.300 30.500-66.400 66.800-66.400zm-6.700-142.600c-11.100 0-20.100-9.100-20.100-20.300.1-11.300 9-20.400 20.100-20.400 11 0 20.100 9.200 20.100 20.400s-9 20.300-20.100 20.300z" fill="#a3b8ef"/>
<rect x="265" y="1026.7" width="14" height="14.4" rx="2.4" fill="#98c379"/>
<path d="M267.6 1033.9 H276.4 M272 1029.4 V1038.4" stroke="#2c313c" stroke-width="2"/>
<rect x="305" y="1026.7" width="14" height="14.4" rx="2.4" fill="#ec5f6b"/>
<path d="M307.6 1033.9 H316.4" stroke="#2c313c" stroke-width="2"/>
<circle cx="372.1" cy="1033.9" r="7.3" fill="#ec5f6b"/>
<path d="M369.9 1031.7 L374.3 1036.1 M374.3 1031.7 L369.9 1036.1" stroke="#2c313c" stroke-width="2.1" stroke-linecap="round"/>
<circle cx="421.9" cy="1033.9" r="7.2" fill="#d2d2d2"/>
<rect x="421" y="1032.6" width="1.9" height="5" fill="#2c313c"/><circle cx="421.9" cy="1030.3" r="1.1" fill="#2c313c"/>
<path d="M460 1026.7 A5.1 5.1 0 0 1 463.3 1035.7 C462.6 1036.4 462.4 1037.2 462.4 1038.2 H457.6 C457.600 1037.200 457.400 1036.400 456.700 1035.700 A5.1 5.1 0 0 1 460 1026.700 Z" fill="#edaf30"/>
<rect x="457.700" y="1039.300" width="4.600" height="1.700" fill="#edaf30"/>
<circle cx="1271" cy="1034" r="3.25" stroke="#abb2bf" stroke-width="2.50" fill="none"/><rect x="1269.45" y="1027.80" width="3.10" height="2.30" fill="#abb2bf" transform="rotate(0.0 1271 1034)"/><rect x="1269.45" y="1027.80" width="3.10" height="2.30" fill="#abb2bf" transform="rotate(45.0 1271 1034)"/><rect x="1269.45" y="1027.80" width="3.10" height="2.30" fill="#abb2bf" transform="rotate(90.0 1271 1034)"/><rect x="1269.45" y="1027.80" width="3.10" height="2.30" fill="#abb2bf" transform="rotate(135.0 1271 1034)"/><rect x="1269.45" y="1027.80" width="3.10" height="2.30" fill="#abb2bf" transform="rotate(180.0 1271 1034)"/><rect x="1269.45" y="1027.80" width="3.10" height="2.30" fill="#abb2bf" transform="rotate(225.0 1271 1034)"/><rect x="1269.45" y="1027.80" width="3.10" height="2.30" fill="#abb2bf" transform="rotate(270.0 1271 1034)"/><rect x="1269.45" y="1027.80" width="3.10" height="2.30" fill="#abb2bf" transform="rotate(315.0 1271 1034)"/>
<circle cx="1279.8" cy="1029.3" r="1.70" stroke="#abb2bf" stroke-width="1.40" fill="none"/><rect x="1278.95" y="1025.90" width="1.70" height="1.60" fill="#abb2bf" transform="rotate(0.0 1279.8 1029.3)"/><rect x="1278.95" y="1025.90" width="1.70" height="1.60" fill="#abb2bf" transform="rotate(45.0 1279.8 1029.3)"/><rect x="1278.95" y="1025.90" width="1.70" height="1.60" fill="#abb2bf" transform="rotate(90.0 1279.8 1029.3)"/><rect x="1278.95" y="1025.90" width="1.70" height="1.60" fill="#abb2bf" transform="rotate(135.0 1279.8 1029.3)"/><rect x="1278.95" y="1025.90" width="1.70" height="1.60" fill="#abb2bf" transform="rotate(180.0 1279.8 1029.3)"/><rect x="1278.95" y="1025.90" width="1.70" height="1.60" fill="#abb2bf" transform="rotate(225.0 1279.8 1029.3)"/><rect x="1278.95" y="1025.90" width="1.70" height="1.60" fill="#abb2bf" transform="rotate(270.0 1279.8 1029.3)"/><rect x="1278.95" y="1025.90" width="1.70" height="1.60" fill="#abb2bf" transform="rotate(315.0 1279.8 1029.3)"/>
<circle cx="1279.8" cy="1038.9" r="1.70" stroke="#abb2bf" stroke-width="1.40" fill="none"/><rect x="1278.95" y="1035.50" width="1.70" height="1.60" fill="#abb2bf" transform="rotate(0.0 1279.8 1038.9)"/><rect x="1278.95" y="1035.50" width="1.70" height="1.60" fill="#abb2bf" transform="rotate(45.0 1279.8 1038.9)"/><rect x="1278.95" y="1035.50" width="1.70" height="1.60" fill="#abb2bf" transform="rotate(90.0 1279.8 1038.9)"/><rect x="1278.95" y="1035.50" width="1.70" height="1.60" fill="#abb2bf" transform="rotate(135.0 1279.8 1038.9)"/><rect x="1278.95" y="1035.50" width="1.70" height="1.60" fill="#abb2bf" transform="rotate(180.0 1279.8 1038.9)"/><rect x="1278.95" y="1035.50" width="1.70" height="1.60" fill="#abb2bf" transform="rotate(225.0 1279.8 1038.9)"/><rect x="1278.95" y="1035.50" width="1.70" height="1.60" fill="#abb2bf" transform="rotate(270.0 1279.8 1038.9)"/><rect x="1278.95" y="1035.50" width="1.70" height="1.60" fill="#abb2bf" transform="rotate(315.0 1279.8 1038.9)"/>
<circle cx="1672" cy="1034" r="6.4" stroke="#98c379" stroke-width="1.3" fill="none"/><circle cx="1672" cy="1034" r="3.9" fill="#98c379"/>
</svg>
</div></body></html>
